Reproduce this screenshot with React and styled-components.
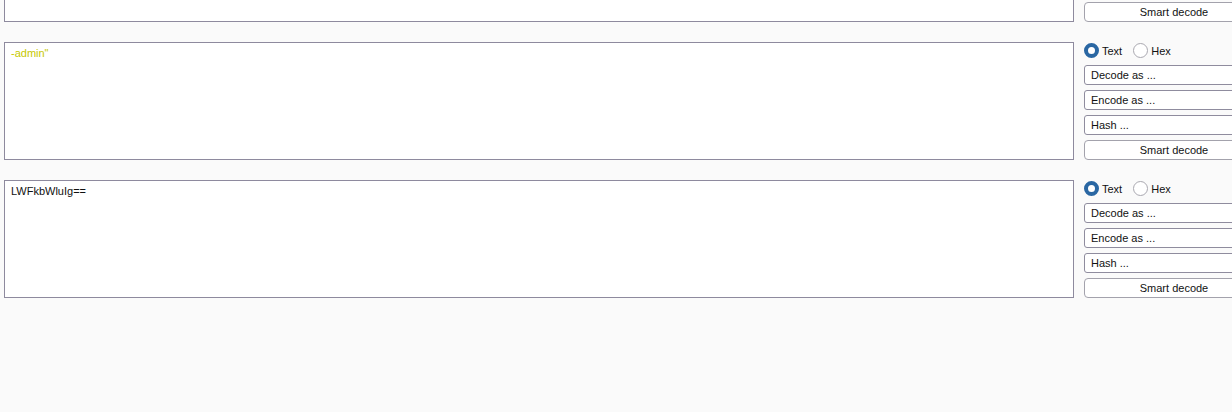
import React from 'react';
import styled, {createGlobalStyle} from 'styled-components';

const GlobalStyle = createGlobalStyle`
  html, body {
    margin: 0;
    padding: 0;
    background: #fafafa;
    overflow: hidden;
    font-family: "Liberation Sans", Arial, sans-serif;
  }
`;

const Page = styled.div`
  width: 1232px;
  height: 412px;
  overflow: hidden;
  background: #fafafa;
`;

const Stack = styled.div`
  display: flex;
  flex-direction: column;
  gap: 20px;
  margin-top: -96px;
  padding-left: 4px;
`;

const Panel = styled.div`
  display: flex;
  flex-direction: row;
  gap: 10px;
  height: 118px;
  width: max-content;
`;

const Editor = styled.textarea`
  flex: none;
  box-sizing: border-box;
  width: 1070px;
  height: 118px;
  margin: 0;
  padding: 3px 6px;
  border: 1px solid #8e8a9e;
  border-radius: 0;
  background: #fff;
  resize: none;
  outline: none;
  font-family: "Liberation Sans", Arial, sans-serif;
  font-size: 11px;
  line-height: 14px;
  color: ${({$tone}) => $tone || '#111'};
`;

const Controls = styled.div`
  flex: none;
  width: 180px;
  display: flex;
  flex-direction: column;
  gap: 5px;
`;

const RadioRow = styled.div`
  height: 18px;
  display: flex;
  align-items: center;
  gap: 3px;
  font-size: 11px;
  color: #111;
  padding-bottom: 1px;
  box-sizing: border-box;
`;

const Radio = styled.span`
  box-sizing: border-box;
  width: 15px;
  height: 15px;
  border-radius: 50%;
  background: #fff;
  border: ${({$on}) => ($on ? '4px solid #2a67a3' : '1px solid #a9a8b0')};
  margin-left: ${({$first}) => ($first ? '0' : '8px')};
`;

const Select = styled.div`
  box-sizing: border-box;
  height: 20px;
  display: flex;
  align-items: center;
  padding-left: 6px;
  background: #fff;
  border: 1px solid #8f8c9e;
  border-radius: 3px;
  font-size: 11px;
  color: #111;
`;

const Button = styled.div`
  box-sizing: border-box;
  height: 20px;
  display: flex;
  align-items: center;
  justify-content: center;
  background: #fff;
  border: 1px solid #a3a2ac;
  border-radius: 4px;
  font-size: 11px;
  color: #111;
`;

const panels = [
  {text: '', tone: '#111'},
  {text: '-admin"', tone: '#c6c800'},
  {text: 'LWFkbWluIg==', tone: '#111'},
];

const Side = () => (
  <Controls>
    <RadioRow>
      <Radio $on $first />
      Text
      <Radio />
      Hex
    </RadioRow>
    <Select>Decode as ...</Select>
    <Select>Encode as ...</Select>
    <Select>Hash ...</Select>
    <Button>Smart decode</Button>
  </Controls>
);

export default function App() {
  return (
    <Page>
      <GlobalStyle />
      <Stack>
        {panels.map((p, i) => (
          <Panel key={i}>
            <Editor readOnly defaultValue={p.text} $tone={p.tone} spellCheck={false} />
            <Side />
          </Panel>
        ))}
      </Stack>
    </Page>
  );
}
